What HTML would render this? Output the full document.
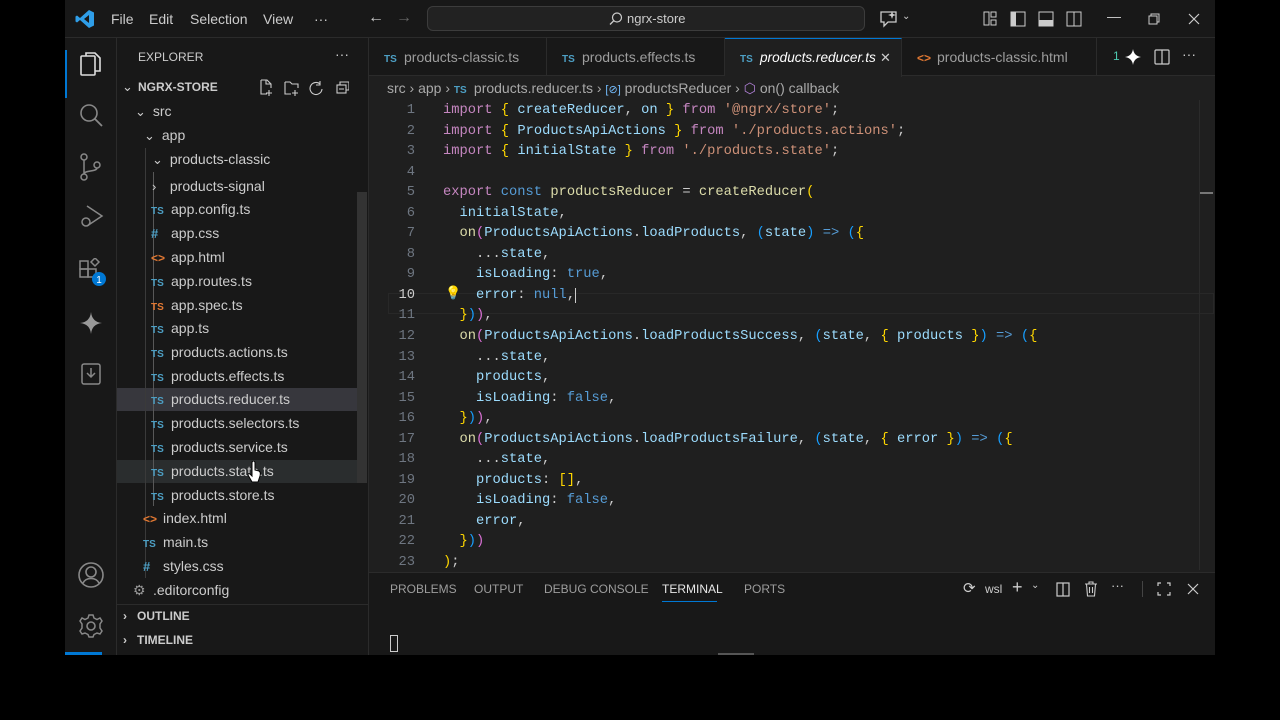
<!DOCTYPE html>
<html><head><meta charset="utf-8"><style>
*{margin:0;padding:0;box-sizing:border-box}
body{width:1280px;height:720px;background:#000;overflow:hidden;font-family:"Liberation Sans",sans-serif;color:#ccc;position:relative}
.a{position:absolute}
#win{position:absolute;left:65px;top:0;width:1150px;height:655px;background:#1f1f1f;overflow:hidden}
#title{left:0;top:0;width:1150px;height:38px;background:#181818;border-bottom:1px solid #2b2b2b}
.menu{top:11px;font-size:14px;color:#ccc}
#act{left:0;top:38px;width:52px;height:617px;background:#181818;border-right:1px solid #2b2b2b}
#side{left:52px;top:38px;width:252px;height:617px;background:#181818;border-right:1px solid #2b2b2b}
.row{position:absolute;left:0;width:240px;height:23px;font-size:14px;color:#ccc;line-height:23px;white-space:nowrap}
.ts{font-size:10px;font-weight:bold;color:#4d9fc4;display:inline-block;width:20px}
.tso{color:#e37933}
.hs{color:#4d9fc4;font-weight:bold;display:inline-block;width:20px;font-size:13px}
.ht{color:#e37933;display:inline-block;width:20px;font-size:12px;font-weight:bold}
.chev{display:inline-block;width:14px;font-size:13px}
#tabs{left:304px;top:38px;width:846px;height:38px;background:#181818;border-bottom:1px solid #2b2b2b}
.tab{position:absolute;top:0;height:38px;line-height:38px;font-size:14px;color:#9d9d9d;border-right:1px solid #2b2b2b;padding-left:15px;white-space:nowrap}
.code{position:absolute;left:378px;top:101px;font-family:"Liberation Mono",monospace;font-size:13.75px;line-height:20.55px;white-space:pre;color:#ccc}
.ln{position:absolute;left:310px;top:101px;width:40px;text-align:right;font-family:"Liberation Mono",monospace;font-size:13.75px;line-height:20.55px;color:#6e7681;white-space:pre}
.k{color:#c586c0}.b{color:#569cd6}.v{color:#9cdcfe}.f{color:#dcdcaa}.s{color:#ce9178}.g{color:#ffd700}.p{color:#da70d6}.q{color:#179fff}.c{color:#4ec9b0}.w{color:#d4d4d4}
#panel{left:304px;top:572px;width:846px;height:83px;background:#181818;border-top:1px solid #2b2b2b}
.pt{position:absolute;top:9px;font-size:12px;color:#9d9d9d}
svg{position:absolute}
</style></head><body>
<div id="win">
<div id="title" class="a">
<svg style="left:10px;top:9px" width="20" height="20" viewBox="0 0 20 20"><path d="M14 1 L19 3.5 V16.5 L14 19 L5 11 L2 13.5 L0.5 12.5 V7.5 L2 6.5 L5 9 Z M14 6 L9 10 L14 14 Z" fill="#2f9ee8" fill-rule="evenodd"/></svg>
<span class="a menu" style="left:46px">File</span><span class="a menu" style="left:84px">Edit</span><span class="a menu" style="left:125px">Selection</span><span class="a menu" style="left:198px">View</span><span class="a menu" style="left:249px">···</span>
<span class="a menu" style="left:303px;font-size:16px;top:9px">←</span><span class="a menu" style="left:331px;font-size:16px;top:9px;color:#666">→</span>
<div class="a" style="left:362px;top:6px;width:438px;height:25px;border:1px solid #3c3c3c;border-radius:6px;background:#222"></div>
<svg style="left:544px;top:12px" width="14" height="14" viewBox="0 0 14 14"><circle cx="8" cy="5.5" r="4.5" fill="none" stroke="#ccc" stroke-width="1.2"/><path d="M4.5 9 L1 12.5" stroke="#ccc" stroke-width="1.3"/></svg>
<span class="a" style="left:562px;top:11px;font-size:13px;color:#ccc">ngrx-store</span>
<svg style="left:814px;top:10px" width="20" height="18"><path d="M2 2H17V12H9L5 16V12H2Z" fill="none" stroke="#ccc" stroke-width="1.3"/><path d="M13 1L14 4L17 5L14 6L13 9L12 6L9 5L12 4Z" fill="#ccc"/></svg><span class="a" style="left:837px;top:11px;font-size:10px;color:#ccc">⌄</span>
<svg style="left:918px;top:11px" width="100" height="16" viewBox="0 0 100 16"><rect x="1" y="1" width="5" height="13" fill="none" stroke="#ccc"/><rect x="8" y="1" width="5" height="5" fill="none" stroke="#ccc"/><rect x="8" y="9" width="5" height="5" fill="none" stroke="#ccc"/><rect x="28" y="1" width="14" height="14" fill="none" stroke="#ccc"/><rect x="28" y="1" width="5" height="14" fill="#ccc"/><rect x="56" y="1" width="14" height="14" fill="none" stroke="#ccc"/><rect x="56" y="9" width="14" height="6" fill="#ccc"/><rect x="84" y="1" width="14" height="14" fill="none" stroke="#ccc"/><path d="M91 1V15" stroke="#ccc"/></svg>
<span class="a" style="left:1042px;top:8px;font-size:14px;color:#ccc">—</span>
<svg style="left:1083px;top:13px" width="12" height="12"><rect x="1" y="3" width="8" height="8" fill="none" stroke="#ccc"/><path d="M3 3V1H11V9H9" fill="none" stroke="#ccc"/></svg>
<svg style="left:1123px;top:13px" width="12" height="12"><path d="M1 1L11 11M11 1L1 11" stroke="#ccc" stroke-width="1.2"/></svg>
</div>
<div id="act" class="a">
<div class="a" style="left:0;top:12px;width:2px;height:48px;background:#0078d4"></div>
<svg style="left:13px;top:12px" width="26" height="28" viewBox="0 0 26 28"><path d="M8 6V3H17L22 8V21H17" fill="none" stroke="#ddd" stroke-width="1.6"/><rect x="3" y="6" width="14" height="19" rx="1" fill="none" stroke="#ddd" stroke-width="1.6"/></svg>
<svg style="left:13px;top:64px" width="26" height="26"><circle cx="11" cy="11" r="8" fill="none" stroke="#888" stroke-width="1.6"/><path d="M17 17L24 24" stroke="#888" stroke-width="1.8"/></svg>
<svg style="left:14px;top:115px" width="24" height="28"><circle cx="5" cy="4" r="3" fill="none" stroke="#888" stroke-width="1.5"/><circle cx="5" cy="24" r="3" fill="none" stroke="#888" stroke-width="1.5"/><circle cx="18" cy="12" r="3" fill="none" stroke="#888" stroke-width="1.5"/><path d="M5 7V21M18 15C18 19 5 17 5 21" fill="none" stroke="#888" stroke-width="1.5"/></svg>
<svg style="left:13px;top:166px" width="26" height="26"><path d="M9 2L24 12L9 22" fill="none" stroke="#888" stroke-width="1.5"/><circle cx="8" cy="18" r="4" fill="none" stroke="#888" stroke-width="1.5"/></svg>
<svg style="left:13px;top:220px" width="28" height="28"><rect x="2" y="3" width="8" height="8" fill="none" stroke="#888" stroke-width="1.5"/><rect x="2" y="11" width="8" height="8" fill="none" stroke="#888" stroke-width="1.5"/><rect x="10" y="11" width="8" height="8" fill="none" stroke="#888" stroke-width="1.5"/><path d="M17 0L21 4L17 8L13 4Z" fill="none" stroke="#888" stroke-width="1.5"/><circle cx="21" cy="21" r="7" fill="#0078d4"/><text x="21" y="25" font-size="10" fill="#fff" text-anchor="middle" font-family="Liberation Sans">1</text></svg>
<svg style="left:14px;top:273px" width="24" height="24"><path d="M12 1Q13 11 23 12Q13 13 12 23Q11 13 1 12Q11 11 12 1Z" fill="#999"/></svg>
<svg style="left:16px;top:325px" width="20" height="22"><rect x="1" y="1" width="18" height="20" rx="2" fill="none" stroke="#888" stroke-width="1.5"/><path d="M10 5V14M6 10L10 14L14 10" fill="none" stroke="#888" stroke-width="1.5"/></svg>
<svg style="left:12px;top:523px" width="28" height="28"><circle cx="14" cy="14" r="12" fill="none" stroke="#888" stroke-width="1.6"/><circle cx="14" cy="11" r="5" fill="none" stroke="#888" stroke-width="1.6"/><path d="M6 22C9 16 19 16 22 22" fill="none" stroke="#888" stroke-width="1.6"/></svg>
<svg style="left:13px;top:575px" width="26" height="26" viewBox="0 0 26 26"><circle cx="13" cy="13" r="4" fill="none" stroke="#888" stroke-width="1.6"/><path d="M11 2H15L16 5L19 6.5L22 5L24 8L22 11V15L24 18L22 21L19 20L16 21.5L15 24H11L10 21.5L7 20L4 21L2 18L4 15V11L2 8L4 5L7 6.5L10 5Z" fill="none" stroke="#888" stroke-width="1.5"/></svg>
<div class="a" style="left:0;top:614px;width:37px;height:3px;background:#0078d4"></div>
</div>
<div id="side" class="a">
<span class="a" style="left:21px;top:12px;font-size:12px;color:#ccc">EXPLORER</span><span class="a" style="left:218px;top:8px;font-size:14px">···</span>
<span class="a" style="left:5px;top:41px;font-size:13px;color:#ccc">⌄</span><span class="a" style="left:21px;top:42px;font-size:12px;font-weight:bold;color:#ccc">NGRX-STORE</span>
<svg style="left:142px;top:41px" width="90" height="18"><path d="M2 1H8L12 5V9M2 1V15H8M7 1V5H12M10 11V17M7 14H13" fill="none" stroke="#ccc" stroke-width="1.1"/><path d="M26 3H31L33 5H39V9M26 3V15H32M36 11V17M33 14H39" fill="none" stroke="#ccc" stroke-width="1.1"/><path d="M61 5A6 6 0 1 0 63 10M61 2V6H57" fill="none" stroke="#ccc" stroke-width="1.1"/><rect x="78" y="6" width="9" height="8" fill="none" stroke="#ccc" stroke-width="1.1"/><path d="M81 6V3H90V11H87M80 10H85" fill="none" stroke="#ccc" stroke-width="1.1"/></svg>
<div class="a" style="left:0;top:350px;width:240px;height:23px;background:#37373d"></div>
<div class="a" style="left:0;top:422px;width:240px;height:23px;background:#2a2d2e"></div>
<div class="a" style="left:28px;top:110px;width:1px;height:430px;background:#3a3a3a"></div>
<div class="a" style="left:36px;top:134px;width:1px;height:334px;background:#585858"></div>
<div class="a" style="left:240px;top:154px;width:10px;height:291px;background:#333"></div>
<div class="row" style="top:62px;left:18px"><span class="chev">⌄</span>&nbsp;src</div>
<div class="row" style="top:86px;left:27px"><span class="chev">⌄</span>&nbsp;app</div>
<div class="row" style="top:110px;left:35px"><span class="chev">⌄</span>&nbsp;products-classic</div>
<div class="row" style="top:137px;left:35px"><span class="chev">›</span>&nbsp;products-signal</div>
<div class="row" style="top:160px;left:34px"><span class="ts">TS</span>app.config.ts</div>
<div class="row" style="top:184px;left:34px"><span class="hs">#</span>app.css</div>
<div class="row" style="top:208px;left:34px"><span class="ht">&lt;&gt;</span>app.html</div>
<div class="row" style="top:232px;left:34px"><span class="ts">TS</span>app.routes.ts</div>
<div class="row" style="top:256px;left:34px"><span class="ts tso">TS</span>app.spec.ts</div>
<div class="row" style="top:279px;left:34px"><span class="ts">TS</span>app.ts</div>
<div class="row" style="top:303px;left:34px"><span class="ts">TS</span>products.actions.ts</div>
<div class="row" style="top:327px;left:34px"><span class="ts">TS</span>products.effects.ts</div>
<div class="row" style="top:350px;left:34px"><span class="ts">TS</span>products.reducer.ts</div>
<div class="row" style="top:374px;left:34px"><span class="ts">TS</span>products.selectors.ts</div>
<div class="row" style="top:398px;left:34px"><span class="ts">TS</span>products.service.ts</div>
<div class="row" style="top:422px;left:34px"><span class="ts">TS</span>products.state.ts</div>
<div class="row" style="top:446px;left:34px"><span class="ts">TS</span>products.store.ts</div>
<div class="row" style="top:469px;left:26px"><span class="ht">&lt;&gt;</span>index.html</div>
<div class="row" style="top:493px;left:26px"><span class="ts">TS</span>main.ts</div>
<div class="row" style="top:517px;left:26px"><span class="hs">#</span>styles.css</div>
<div class="row" style="top:541px;left:16px"><span style="color:#999;display:inline-block;width:20px">⚙</span>.editorconfig</div>
<div class="a" style="left:0;top:566px;width:252px;height:1px;background:#2b2b2b"></div>
<div class="row" style="top:567px;left:6px;font-size:12px;font-weight:bold">›&nbsp;&nbsp; OUTLINE</div>
<div class="row" style="top:591px;left:6px;font-size:12px;font-weight:bold">›&nbsp;&nbsp; TIMELINE</div>
<svg style="left:130px;top:423px" width="16" height="22"><path d="M5 2Q5 0 6.5 0Q8 0 8 2V9L12 10Q14 11 13 15L11 21H5L1 14Q1 12 3 13L5 15Z" fill="#fff" stroke="#000" stroke-width="1"/></svg>
</div>
<div id="tabs" class="a">
<div class="tab" style="left:0;width:178px"><span class="ts">TS</span>products-classic.ts</div>
<div class="tab" style="left:178px;width:178px"><span class="ts">TS</span>products.effects.ts</div>
<div class="tab" style="left:356px;width:177px;background:#1f1f1f;color:#fff;border-top:1px solid #0078d4;height:39px;font-size:13.6px"><span class="ts">TS</span><i>products.reducer.ts</i><span style="position:absolute;left:155px;color:#ccc;font-size:13px">✕</span></div>
<div class="tab" style="left:533px;width:195px"><span class="ht">&lt;&gt;</span>products-classic.html</div>
<span class="a" style="left:744px;top:11px;font-size:12px;color:#4ec9b0">1</span>
<svg style="left:756px;top:11px" width="16" height="16"><path d="M8 0Q9 7 16 8Q9 9 8 16Q7 9 0 8Q7 7 8 0Z" fill="#fff"/></svg>
<svg style="left:785px;top:11px" width="16" height="16"><rect x="1" y="1" width="14" height="14" rx="1" fill="none" stroke="#ccc" stroke-width="1.2"/><path d="M8 1V15" stroke="#ccc" stroke-width="1.2"/></svg>
<span class="a" style="left:813px;top:8px;font-size:14px">···</span>
</div>
<div class="a" style="left:322px;top:80px;font-size:14px;color:#a9a9a9;white-space:nowrap">src › app › <span class="ts">TS</span>products.reducer.ts › <span style="color:#75beff;font-size:11px">[⊘]</span> productsReducer › <span style="color:#b180d7">⬡</span> on() callback</div>
<div class="a" style="left:323px;top:293px;width:826px;height:21px;border:1px solid #282828"></div>
<div class="a" style="left:1134px;top:192px;width:14px;height:2px;background:#777"></div>
<div class="a" style="left:1134px;top:100px;width:1px;height:470px;background:#2b2b2b"></div>
<div class="ln">1
2
3
4
5
6
7
8
9
<span style="color:#ccc">10</span>
11
12
13
14
15
16
17
18
19
20
21
22
23</div>
<span class="a" style="left:380px;top:285px;font-size:13px;color:#ffcc00">💡</span>
<div class="code"><span class="k">import</span> <span class="g">{</span> <span class="v">createReducer</span>, <span class="v">on</span> <span class="g">}</span> <span class="k">from</span> <span class="s">'@ngrx/store'</span>;
<span class="k">import</span> <span class="g">{</span> <span class="v">ProductsApiActions</span> <span class="g">}</span> <span class="k">from</span> <span class="s">'./products.actions'</span>;
<span class="k">import</span> <span class="g">{</span> <span class="v">initialState</span> <span class="g">}</span> <span class="k">from</span> <span class="s">'./products.state'</span>;

<span class="k">export</span> <span class="b">const</span> <span class="f">productsReducer</span> = <span class="f">createReducer</span><span class="g">(</span>
  <span class="v">initialState</span>,
  <span class="f">on</span><span class="p">(</span><span class="v">ProductsApiActions</span>.<span class="v">loadProducts</span>, <span class="q">(</span><span class="v">state</span><span class="q">)</span> <span class="b">=&gt;</span> <span class="q">(</span><span class="g">{</span>
    ...<span class="v">state</span>,
    <span class="v">isLoading</span>: <span class="b">true</span>,
    <span class="v">error</span>: <span class="b">null</span>,<span style="border-left:1.5px solid #ccc"></span>
  <span class="g">}</span><span class="q">)</span><span class="p">)</span>,
  <span class="f">on</span><span class="p">(</span><span class="v">ProductsApiActions</span>.<span class="v">loadProductsSuccess</span>, <span class="q">(</span><span class="v">state</span>, <span class="g">{</span> <span class="v">products</span> <span class="g">}</span><span class="q">)</span> <span class="b">=&gt;</span> <span class="q">(</span><span class="g">{</span>
    ...<span class="v">state</span>,
    <span class="v">products</span>,
    <span class="v">isLoading</span>: <span class="b">false</span>,
  <span class="g">}</span><span class="q">)</span><span class="p">)</span>,
  <span class="f">on</span><span class="p">(</span><span class="v">ProductsApiActions</span>.<span class="v">loadProductsFailure</span>, <span class="q">(</span><span class="v">state</span>, <span class="g">{</span> <span class="v">error</span> <span class="g">}</span><span class="q">)</span> <span class="b">=&gt;</span> <span class="q">(</span><span class="g">{</span>
    ...<span class="v">state</span>,
    <span class="v">products</span>: <span class="g">[]</span>,
    <span class="v">isLoading</span>: <span class="b">false</span>,
    <span class="v">error</span>,
  <span class="g">}</span><span class="q">)</span><span class="p">)</span>
<span class="g">)</span>;</div>
<div id="panel" class="a">
<span class="pt" style="left:21px">PROBLEMS</span><span class="pt" style="left:105px">OUTPUT</span><span class="pt" style="left:175px">DEBUG CONSOLE</span><span class="pt" style="left:293px;color:#e7e7e7">TERMINAL</span><span class="pt" style="left:375px">PORTS</span>
<div class="a" style="left:293px;top:28px;width:55px;height:1px;background:#0078d4"></div>
<span class="a" style="left:594px;top:6px;font-size:15px;color:#ccc">⟳</span><span class="a" style="left:616px;top:9px;font-size:12px">wsl</span>
<span class="a" style="left:643px;top:4px;font-size:18px;color:#ccc">+</span><span class="a" style="left:662px;top:7px;font-size:10px">⌄</span>
<svg style="left:687px;top:9px" width="14" height="15"><rect x="1" y="1" width="12" height="13" fill="none" stroke="#ccc" stroke-width="1.2"/><path d="M7 1V14" stroke="#ccc" stroke-width="1.2"/></svg>
<svg style="left:715px;top:8px" width="14" height="16"><path d="M1 3H13M5 3V1H9V3M2.5 3L3.5 15H10.5L11.5 3M5.5 6V12M8.5 6V12" fill="none" stroke="#ccc" stroke-width="1.1"/></svg>
<span class="a" style="left:742px;top:5px;font-size:13px">···</span>
<div class="a" style="left:773px;top:8px;width:1px;height:16px;background:#444"></div>
<svg style="left:788px;top:9px" width="14" height="14"><path d="M1 4V1H4M10 1H13V4M13 10V13H10M4 13H1V10" fill="none" stroke="#ccc" stroke-width="1.2"/></svg>
<svg style="left:818px;top:10px" width="12" height="12"><path d="M1 1L11 11M11 1L1 11" stroke="#ccc" stroke-width="1.2"/></svg>
<div class="a" style="left:21px;top:62px;width:8px;height:17px;border:1px solid #ccc"></div>
<div class="a" style="left:349px;top:80px;width:36px;height:3px;background:#555"></div>
</div>
</div>
</body></html>
